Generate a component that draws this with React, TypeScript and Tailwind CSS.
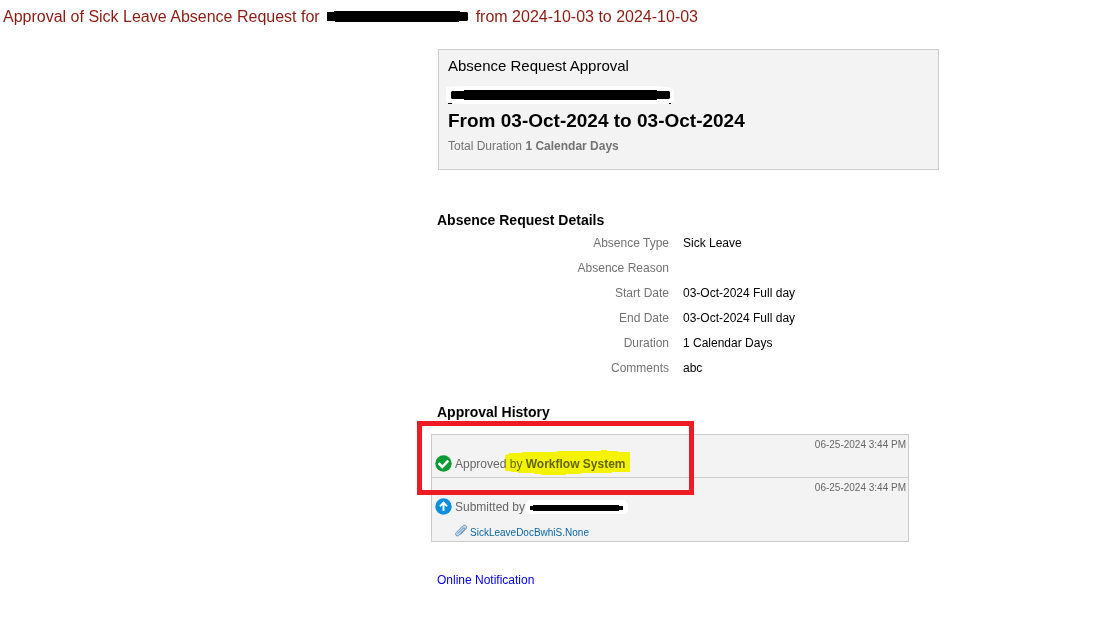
import type { ReactNode } from 'react'

const details = [
  { label: 'Absence Type', value: 'Sick Leave' },
  { label: 'Absence Reason', value: '' },
  { label: 'Start Date', value: '03-Oct-2024 Full day' },
  { label: 'End Date', value: '03-Oct-2024 Full day' },
  { label: 'Duration', value: '1 Calendar Days' },
  { label: 'Comments', value: 'abc' },
]

const ApprovedIcon = () => (
  <svg className="shrink-0" width="17" height="17" viewBox="0 0 17 17" aria-hidden="true">
    <circle cx="8.5" cy="8.5" r="8.2" fill="#0b9a33" />
    <path d="M3.6 8.1l3.7 3.7 6-6.2" fill="none" stroke="#fff" strokeWidth="2.6" />
  </svg>
)

const SubmittedIcon = () => (
  <svg className="shrink-0" width="17" height="17" viewBox="0 0 17 17" aria-hidden="true">
    <circle cx="8.5" cy="8.5" r="8.2" fill="#0a8fdc" />
    <path d="M8.5 13V4.8M4.9 8.3l3.6-3.6 3.6 3.6" fill="none" stroke="#fff" strokeWidth="1.9" />
  </svg>
)

const ClipIcon = () => (
  <svg className="shrink-0 self-start" width="14" height="14" viewBox="0 0 14 14" fill="none" aria-hidden="true">
    <path d="M2.8 10.800L10.800 2.800" stroke="#c3d9ea" strokeWidth="3.6" strokeLinecap="round" />
    <path d="M4.200 9.200l5-5c1-1 2.300.1 1.400 1.200L5.200 11.200c-1.900 1.900-4.800-.5-3-2.600L8.700 2c2.200-2.100 5.300.3 3.400 2.700L6.800 10.300" stroke="#6295bd" strokeWidth="1" strokeLinecap="round" />
  </svg>
)

// Hidden names
const TitleMask = () => (
  <svg className="mx-[7px] shrink-0" width="142" height="12" viewBox="0 0 142 12" aria-hidden="true">
    <path d="M0 1h7V0h126v1h7l1 1v7l-1 1h-8v1H8v-1H0z" fill="#000" />
  </svg>
)

const CardMask = () => (
  <svg className="block overflow-visible" width="224" height="19" viewBox="0 0 224 19" aria-hidden="true">
    <path d="M-2 1l18-1h194l14 2 2 3v9l-3 3-14 1H16L0 17l-2-3z" fill="#fff" />
    <path d="M4 5h12V4h193v1h12l1 1v6l-1 1h-12v1H16v-1H4l-1-1V6z" fill="#000" />
    <path d="M0 17h4v1H0zM221 17h2v1h-2z" fill="#000" />
  </svg>
)

const SubmitterMask = () => (
  <svg className="-ml-0.5 shrink-0" width="102" height="16" viewBox="0 -3 102 16" aria-hidden="true">
    <path d="M3 -1h96l3 4v7l-3 3H4l-4-3V3z" fill="#fff" />
    <path d="M4 5h3V4h86v1h4v4h-4v1H7V9H4z" fill="#000" />
  </svg>
)

const Highlight = () => (
  <svg className="absolute -left-[5px] -top-[5px] mix-blend-multiply" width="125" height="26" viewBox="0 0 125 26" aria-hidden="true">
    <path d="M0 5l4-1V3h13V2h35V1h44V0h6v1h11v1h12v20h-18v1H76v1H61v1H36v-1H29v-1H13v-1H6v-1H0z" fill="#ffff00" />
  </svg>
)

const HistoryRow = ({ time, children }: { time: string; children: ReactNode }) => (
  <li className="border-b border-[#cccccc] pl-[3px]">
    <div className="pr-0.5 text-right text-[10px] leading-5">{time}</div>
    {children}
  </li>
)

const App = () => {
  return (
    <div className="min-h-screen bg-white font-['Liberation_Sans',Arial,sans-serif] text-xs text-black">
      <h1 className="flex items-center pl-[3px] pt-[5px] text-base leading-6 text-[#8b1c12]">
        Approval of Sick Leave Absence Request for
        <TitleMask />
        from 2024-10-03 to 2024-10-03
      </h1>

      <main className="ml-[431px] max-w-[508px] pt-5">
        <section className="ml-[7px] border border-[#cccccc] bg-[#f3f3f3] px-[9px] pb-[13px] pt-1.5">
          <h2 className="text-[15px] leading-5">Absence Request Approval</h2>
          <div className="pt-2.5">
            <CardMask />
          </div>
          <p className="pt-1 text-[19px] leading-6 font-bold">From 03-Oct-2024 to 03-Oct-2024</p>
          <p className="pt-[3px] leading-5 text-[#737373]">
            Total Duration <b>1 Calendar Days</b>
          </p>
        </section>

        <section className="pt-10">
          <h2 className="pl-1.5 text-sm leading-5 font-bold">Absence Request Details</h2>
          <dl className="pt-px">
            {details.map((d) => (
              <div key={d.label} className="grid grid-cols-[238px_1fr] gap-x-3.5 leading-[25px]">
                <dt className="text-right text-[#737373]">{d.label}</dt>
                <dd>{d.value}</dd>
              </div>
            ))}
          </dl>
        </section>

        <section className="pt-[21px]">
          <h2 className="pl-1.5 text-sm leading-5 font-bold">Approval History</h2>
          <div className="relative mr-[30px] mt-3">
            <ul className="border-x border-t border-[#cccccc] bg-[#f3f3f3] text-[#666666]">
              <HistoryRow time="06-25-2024 3:44 PM">
                <div className="flex items-start gap-[3px] pb-1 leading-[18px]">
                  <ApprovedIcon />
                  <p>
                    Approved{' '}
                    <span className="relative inline-block">
                      by <b>Workflow System</b>
                      <Highlight />
                    </span>
                  </p>
                </div>
              </HistoryRow>
              <HistoryRow time="06-25-2024 3:44 PM">
                <div className="flex items-start gap-[3px] leading-[18px]">
                  <SubmittedIcon />
                  <p>Submitted by</p>
                  <SubmitterMask />
                </div>
                <a href="#attachment" className="ml-[19px] mt-2 flex items-center gap-0.5 text-[10px] leading-[17px] text-[#0a66a5]">
                  <ClipIcon />
                  SickLeaveDocBwhiS.None
                </a>
              </HistoryRow>
            </ul>
            {/* Callout around the workflow approval */}
            <div className="pointer-events-none absolute -left-3.5 -top-[13px] h-[74px] w-[277px] border-5 border-[#ed1c24]" />
          </div>
        </section>

        <a href="#notification" className="ml-1.5 mt-7 inline-block leading-5 text-[#0000ee]">
          Online Notification
        </a>
      </main>
    </div>
  )
}

export default App
